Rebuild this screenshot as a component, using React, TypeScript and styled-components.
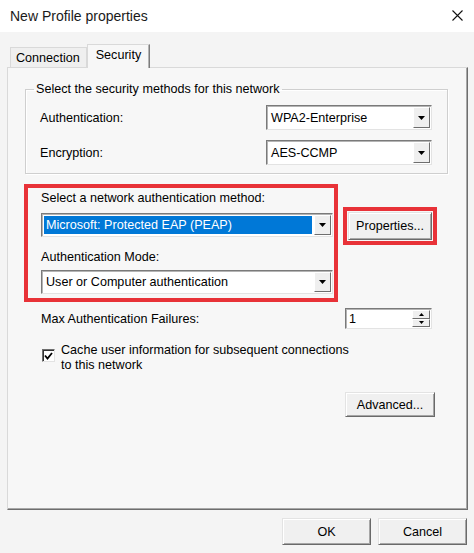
import React from "react";
import styled, { createGlobalStyle } from "styled-components";

const GlobalStyle = createGlobalStyle`
  html, body {
    margin: 0;
    padding: 0;
    background: #f4f4f4;
  }
  body {
    font-family: "Liberation Sans", Arial, sans-serif;
    font-size: 12.6px;
    color: #000;
  }
  *, *::before, *::after {
    box-sizing: border-box;
  }
`;

const Window = styled.div`
  width: 474px;
  height: 553px;
  background: #f4f4f4;
  display: flex;
  flex-direction: column;
  overflow: hidden;
`;

const TitleBar = styled.div`
  height: 32px;
  background: #fff;
  display: flex;
  align-items: center;
  justify-content: space-between;
  padding: 0 11px 1px 10px;
`;

const Title = styled.div`
  font-size: 14px;
  color: #1a1a1a;
`;

const Body = styled.div`
  display: flex;
  flex-direction: column;
  padding: 12px 6px 0 7px;
`;

const TabStrip = styled.div`
  display: flex;
  align-items: flex-end;
  height: 23px;
  padding-left: 3px;
`;

const Tab = styled.div<{ $active?: boolean }>`
  position: relative;
  z-index: ${(p) => (p.$active ? 1 : 0)};
  height: ${(p) => (p.$active ? 24 : 20)}px;
  margin-bottom: ${(p) => (p.$active ? -1 : 0)}px;
  display: flex;
  align-items: center;
  padding: ${(p) => (p.$active ? "0 8px 3px 8px" : "0 6px 0 5px")};
  background: ${(p) => (p.$active ? "#f7f7f7" : "#efefef")};
  border-top: 1px solid #d9d9d9;
  border-left: 1px solid #d9d9d9;
  border-right: 1px solid ${(p) => (p.$active ? "#7d7d7d" : "#d9d9d9")};
  box-shadow: ${(p) => (p.$active ? "inset -1px 0 0 #b4b4b4" : "none")};
`;

const Panel = styled.div`
  height: 443px;
  display: flex;
  flex-direction: column;
  align-items: flex-start;
  background: #f7f7f7;
  border-top: 1px solid #d9d9d9;
  border-left: 1px solid #d9d9d9;
  border-right: 1px solid #6e6e6e;
  border-bottom: 1px solid #6e6e6e;
  box-shadow: inset -1px -1px 0 #a8a8a8;
`;

const GroupBox = styled.fieldset`
  margin: 13px 0 0 17px;
  width: 423px;
  padding: 8px 15px 8px 14px;
  border: 1px solid #cfcfcf;
  box-shadow: 1px 1px 0 #fff, inset 1px 1px 0 #fff;
  display: flex;
  flex-direction: column;
  gap: 10px;
`;

const Legend = styled.legend`
  padding: 0 2px;
  margin-left: -6px;
  line-height: 16px;
`;

const FieldRow = styled.div`
  display: flex;
  align-items: center;
  justify-content: space-between;
  height: 25px;
`;

const Select = styled.div<{ $width: number; $height: number }>`
  width: ${(p) => p.$width}px;
  height: ${(p) => p.$height}px;
  display: flex;
  background: #fff;
  border: 1px solid;
  border-color: #7a7a7a #e3e3e3 #e3e3e3 #7a7a7a;
  box-shadow: inset 1px 1px 0 #b4b4b4;
`;

const SelectValue = styled.div<{ $selected?: boolean }>`
  flex: 1;
  margin: 2px;
  padding-left: 2px;
  display: flex;
  align-items: center;
  white-space: nowrap;
  overflow: hidden;
  background: ${(p) => (p.$selected ? "#0078d7" : "transparent")};
  color: ${(p) => (p.$selected ? "#fff" : "#000")};
`;

const ArrowButton = styled.div`
  width: 17px;
  margin: 1px 1px 1px 0;
  display: flex;
  align-items: center;
  justify-content: center;
  background: #efefef;
  border: 1px solid;
  border-color: #fff #6e6e6e #6e6e6e #fff;
`;

const Highlight = styled.div<{ $mt?: number; $ml?: number }>`
  margin: ${(p) => p.$mt ?? 0}px 0 0 ${(p) => p.$ml ?? 0}px;
  border: 4px solid #e83238;
`;

const MethodBox = styled(Highlight)`
  width: 314px;
  padding: 2px 1px 4px 13px;
  display: flex;
  flex-direction: column;
`;

const Label = styled.div<{ $mt?: number }>`
  line-height: 16px;
  margin-top: ${(p) => p.$mt ?? 0}px;
  white-space: nowrap;
`;

const Spaced = styled.div<{ $mt: number }>`
  margin-top: ${(p) => p.$mt}px;
`;

const RedRow = styled.div`
  display: flex;
  align-items: flex-start;
  margin: 10px 0 0 16px;
`;

const PropsBox = styled(Highlight)`
  padding: 1px;
`;

const Button = styled.button<{ $w: number; $h: number }>`
  width: ${(p) => p.$w}px;
  height: ${(p) => p.$h}px;
  padding: 0;
  margin: 0;
  font: inherit;
  color: #000;
  background: #f0f0f0;
  border: 1px solid;
  border-color: #e3e3e3 #6a6a6a #6a6a6a #e3e3e3;
  box-shadow: inset 1px 1px 0 #fff, inset -1px -1px 0 #a6a6a6;
  display: flex;
  align-items: center;
  justify-content: center;
`;

const SpinRow = styled.div`
  display: flex;
  align-items: center;
  justify-content: space-between;
  width: 391px;
  height: 21px;
  margin: 6px 0 0 33px;
`;

const SpinBox = styled.div`
  width: 87px;
  height: 21px;
  display: flex;
  background: #fff;
  border: 1px solid;
  border-color: #7a7a7a #e3e3e3 #e3e3e3 #7a7a7a;
  box-shadow: inset 1px 1px 0 #b4b4b4;
`;

const SpinValue = styled.div`
  flex: 1;
  padding-left: 3px;
  display: flex;
  align-items: center;
`;

const SpinButtons = styled.div`
  width: 18px;
  margin: 1px 1px 1px 0;
  display: flex;
  flex-direction: column;
`;

const SpinHalf = styled.div`
  flex: 1;
  display: flex;
  align-items: center;
  justify-content: center;
  background: #efefef;
  border: 1px solid;
  border-color: #fff #6e6e6e #6e6e6e #fff;
`;

const CheckRow = styled.div`
  display: flex;
  align-items: flex-start;
  margin: 14px 0 0 34px;
`;

const CheckBox = styled.div`
  width: 13px;
  height: 13px;
  margin-top: 6px;
  flex: none;
  background: #fff;
  border: 1px solid;
  border-color: #6e6e6e #e3e3e3 #e3e3e3 #6e6e6e;
  box-shadow: inset 1px 1px 0 #333;
  display: flex;
  align-items: center;
  justify-content: center;
`;

const CheckText = styled.div`
  margin-left: 6px;
  line-height: 14.5px;
`;

const AdvancedWrap = styled.div`
  margin: 20px 0 0 337px;
`;

const ButtonRow = styled.div`
  display: flex;
  justify-content: flex-end;
  gap: 7px;
  margin: 8px 1px 0 0;
`;

const DownArrow = () => (
  <svg width="7" height="4" viewBox="0 0 7 4">
    <path d="M0 0 H7 L3.5 4 Z" fill="#000" />
  </svg>
);

const Tri = ({ up }: { up?: boolean }) => (
  <svg width="5" height="3" viewBox="0 0 5 3">
    <path d={up ? "M0 3 H5 L2.5 0 Z" : "M0 0 H5 L2.5 3 Z"} fill="#000" />
  </svg>
);

const Dropdown = ({
  value,
  width,
  height,
  selected,
}: {
  value: string;
  width: number;
  height: number;
  selected?: boolean;
}) => (
  <Select $width={width} $height={height}>
    <SelectValue $selected={selected}>{value}</SelectValue>
    <ArrowButton>
      <DownArrow />
    </ArrowButton>
  </Select>
);

export default function App() {
  return (
    <>
      <GlobalStyle />
      <Window>
        <TitleBar>
          <Title>New Profile properties</Title>
          <svg width="11" height="11" viewBox="0 0 11 11">
            <path d="M0.5 0.5 L10.5 10.5 M10.5 0.5 L0.5 10.5" stroke="#111" strokeWidth="1.1" />
          </svg>
        </TitleBar>
        <Body>
          <TabStrip>
            <Tab>Connection</Tab>
            <Tab $active>Security</Tab>
          </TabStrip>
          <Panel>
            <GroupBox>
              <Legend>Select the security methods for this network</Legend>
              <FieldRow>
                <span>Authentication:</span>
                <Dropdown value="WPA2-Enterprise" width={166} height={25} />
              </FieldRow>
              <FieldRow>
                <span>Encryption:</span>
                <Dropdown value="AES-CCMP" width={166} height={25} />
              </FieldRow>
            </GroupBox>

            <RedRow>
              <MethodBox>
                <Label>Select a network authentication method:</Label>
                <Spaced $mt={7}>
                  <Dropdown value="Microsoft: Protected EAP (PEAP)" width={292} height={24} selected />
                </Spaced>
                <Label $mt={12}>Authentication Mode:</Label>
                <Spaced $mt={5}>
                  <Dropdown value="User or Computer authentication" width={292} height={24} />
                </Spaced>
              </MethodBox>
              <PropsBox $mt={23} $ml={5}>
                <Button $w={84} $h={28}>Properties...</Button>
              </PropsBox>
            </RedRow>

            <SpinRow>
              <span>Max Authentication Failures:</span>
              <SpinBox>
                <SpinValue>1</SpinValue>
                <SpinButtons>
                  <SpinHalf>
                    <Tri up />
                  </SpinHalf>
                  <SpinHalf>
                    <Tri />
                  </SpinHalf>
                </SpinButtons>
              </SpinBox>
            </SpinRow>

            <CheckRow>
              <CheckBox>
                <svg width="9" height="8" viewBox="0 0 9 8">
                  <path d="M1 3.5 L3.5 6.5 L8 1" stroke="#000" strokeWidth="1.8" fill="none" />
                </svg>
              </CheckBox>
              <CheckText>
                Cache user information for subsequent connections
                <br />
                to this network
              </CheckText>
            </CheckRow>

            <AdvancedWrap>
              <Button $w={90} $h={25}>Advanced...</Button>
            </AdvancedWrap>
          </Panel>
          <ButtonRow>
            <Button $w={89} $h={27}>OK</Button>
            <Button $w={89} $h={27}>Cancel</Button>
          </ButtonRow>
        </Body>
      </Window>
    </>
  );
}
